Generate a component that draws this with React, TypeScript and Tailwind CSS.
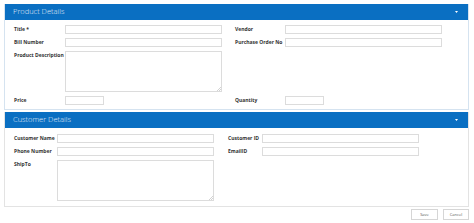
import React from "react";

interface FieldProps {
  label: string;
  labelWidth: string;
  inputWidth: string;
  multiline?: boolean;
}

function Field({ label, labelWidth, inputWidth, multiline }: FieldProps) {
  return (
    <div className="flex items-start">
      <label className={`${labelWidth} h-[9px] shrink-0 text-[5px] leading-[9px] font-bold text-[#333]`}>
        {label}
      </label>
      {multiline ? (
        <div className="relative">
          <textarea className={`${inputWidth} block h-[41px] resize-none border border-[#dcdcdc] bg-white text-[5px] outline-none`} />
          <svg className="absolute right-[1px] bottom-[1px]" width="4" height="4" viewBox="0 0 4 4">
            <path d="M4 0L0 4M4 2L2 4" stroke="#b5b5b5" strokeWidth="0.6" />
          </svg>
        </div>
      ) : (
        <input type="text" className={`${inputWidth} h-[9px] border border-[#dcdcdc] bg-white text-[5px] outline-none`} />
      )}
    </div>
  );
}

function PanelHeader({ title }: { title: string }) {
  return (
    <div className="flex h-[16px] items-center justify-between bg-[#0a6fc2] pl-[8px] pr-[10px] text-[7.5px] font-light text-[#e4eef8]">
      <span>{title}</span>
      <svg width="3" height="2" viewBox="0 0 3 2">
        <path d="M0 0h3L1.5 2z" fill="#fff" />
      </svg>
    </div>
  );
}

function SmallInput({ width }: { width: string }) {
  return <input type="text" className={`${width} h-[9px] border border-[#dcdcdc] bg-white outline-none`} />;
}

export default function App() {
  return (
    <div className="h-[223px] w-[474px] bg-white p-[4px] pr-[5px] font-['Open_Sans',sans-serif]">
      <div className="border border-t-0 border-[#d5e3f0]">
        <PanelHeader title="Product Details" />
        <div className="flex gap-[13px] px-[9px] pt-[5px] pb-[4px]">
          <div className="flex flex-col gap-[4px]">
            <Field label="Title *" labelWidth="w-[51px]" inputWidth="w-[157px]" />
            <Field label="Bill Number" labelWidth="w-[51px]" inputWidth="w-[157px]" />
            <Field label="Product Description" labelWidth="w-[51px]" inputWidth="w-[157px]" multiline />
            <div className="flex items-start">
              <label className="h-[9px] w-[51px] shrink-0 text-[5px] leading-[9px] font-bold text-[#333]">Price</label>
              <SmallInput width="w-[39px]" />
            </div>
          </div>
          <div className="flex flex-col gap-[4px]">
            <Field label="Vendor" labelWidth="w-[50px]" inputWidth="w-[157px]" />
            <Field label="Purchase Order No" labelWidth="w-[50px]" inputWidth="w-[157px]" />
            <div className="h-[41px]" />
            <div className="flex items-start">
              <label className="h-[9px] w-[50px] shrink-0 text-[5px] leading-[9px] font-bold text-[#333]">Quantity</label>
              <SmallInput width="w-[39px]" />
            </div>
          </div>
        </div>
      </div>

      <div className="mt-[2px] border border-t-0 border-[#e3e3e3]">
        <PanelHeader title="Customer Details" />
        <div className="flex gap-[14px] px-[9px] pt-[6px] pb-[5px]">
          <div className="flex flex-col gap-[4px]">
            <Field label="Customer Name" labelWidth="w-[43px]" inputWidth="w-[157px]" />
            <Field label="Phone Number" labelWidth="w-[43px]" inputWidth="w-[157px]" />
            <Field label="ShipTo" labelWidth="w-[43px]" inputWidth="w-[157px]" multiline />
          </div>
          <div className="flex flex-col gap-[4px]">
            <Field label="Customer ID" labelWidth="w-[34px]" inputWidth="w-[157px]" />
            <Field label="EmailID" labelWidth="w-[34px]" inputWidth="w-[157px]" />
          </div>
        </div>
      </div>

      <div className="mt-[2px] flex justify-end gap-[5px]">
        <button className="h-[11px] w-[27px] border border-[#d6d6d6] bg-white text-[4px] text-[#555]">Save</button>
        <button className="h-[11px] w-[26px] border border-[#d6d6d6] bg-white text-[4px] text-[#555]">Cancel</button>
      </div>
    </div>
  );
}
